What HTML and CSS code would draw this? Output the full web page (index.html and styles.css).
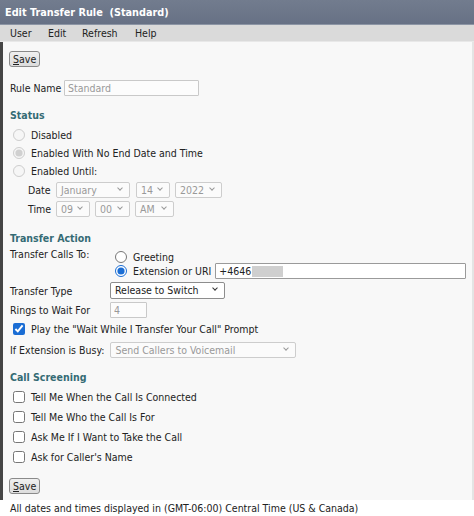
FILE: index.html
```html
<!DOCTYPE html>
<html lang="en">
<head>
    <meta charset="UTF-8">
    <title>Edit Transfer Rule (Standard)</title>
    <link rel="stylesheet" href="styles.css">
</head>
<body>
    <div class="titlebar">Edit Transfer Rule&nbsp; (Standard)</div>
    <div class="menubar">
        <span class="m-user">User</span>
        <span class="m-edit">Edit</span>
        <span class="m-refresh">Refresh</span>
        <span>Help</span>
    </div>

    <div class="content">
        <button class="btn"><u>S</u>ave</button>

        <div class="row rule-row">
            <label class="rule-label">Rule Name</label>
            <input class="text rule-name" type="text" value="Standard" disabled>
        </div>

        <h3>Status</h3>
        <div class="radio-row"><input type="radio" name="status" disabled><span>Disabled</span></div>
        <div class="radio-row"><input type="radio" name="status" checked disabled><span>Enabled With No End Date and Time</span></div>
        <div class="radio-row"><input type="radio" name="status" disabled><span>Enabled Until:</span></div>
        <div class="row date-row">
            <label class="dlabel">Date</label>
            <span class="sel w-month">January</span>
            <span class="sel w-day">14</span>
            <span class="sel w-year">2022</span>
        </div>
        <div class="row date-row">
            <label class="dlabel">Time</label>
            <span class="sel w-hour">09</span>
            <span class="sel w-min">00</span>
            <span class="sel w-ampm">AM</span>
        </div>

        <h3 class="section">Transfer Action</h3>
        <div class="calls-to">
            <label class="calls-label">Transfer Calls To:</label>
            <div class="calls-options">
                <div class="radio-row sub"><input type="radio" name="to"><span>Greeting</span></div>
                <div class="radio-row sub ext">
                    <input type="radio" name="to" checked><span class="nowrap">Extension or URI</span>
                    <div class="text ext-field">+4646<span class="redact"></span></div>
                </div>
            </div>
        </div>
        <div class="row type-row">
            <label class="col-label">Transfer Type</label>
            <span class="sel enabled w-type">Release to Switch</span>
        </div>
        <div class="row rings-row">
            <label class="col-label">Rings to Wait For</label>
            <input class="text rings" type="text" value="4" disabled>
        </div>
        <div class="check-row"><input type="checkbox" checked><span>Play the "Wait While I Transfer Your Call" Prompt</span></div>
        <div class="row busy-row">
            <label class="busy-label">If Extension is Busy:</label>
            <span class="sel w-busy">Send Callers to Voicemail</span>
        </div>

        <h3 class="screening">Call Screening</h3>
        <div class="check-row"><input type="checkbox"><span>Tell Me When the Call Is Connected</span></div>
        <div class="check-row"><input type="checkbox"><span>Tell Me Who the Call Is For</span></div>
        <div class="check-row"><input type="checkbox"><span>Ask Me If I Want to Take the Call</span></div>
        <div class="check-row"><input type="checkbox"><span>Ask for Caller's Name</span></div>

        <button class="btn bottom"><u>S</u>ave</button>
    </div>

    <div class="footer">All dates and times displayed in (GMT-06:00) Central Time (US &amp; Canada)</div>
</body>
</html>
```

FILE: styles.css
```css
body {
    margin: 0;
    font-family: "DejaVu Sans Condensed", "DejaVu Sans", Verdana, sans-serif;
    font-size: 10.5px;
    color: #222;
    background: #fff;
    width: 474px;
}
.titlebar {
    height: 25px;
    line-height: 26px;
    padding-left: 5px;
    background: linear-gradient(#727c8e, #677185);
    border-bottom: 1px solid #8c95a5;
    color: #fff;
    font-weight: bold;
    font-size: 10.8px;
    box-sizing: border-box;
}
.menubar {
    height: 17px;
    line-height: 16px;
    background: #dadada;
    border-bottom: 1px solid #e8e8e8;
    box-sizing: border-box;
    padding-left: 10px;
    display: flex;
}
.m-user { width: 38px; }
.m-edit { width: 34px; }
.m-refresh { width: 53px; }
.content {
    background: #f8f8f8;
    border-left: 3px solid #454545;
    border-right: 2px solid #e4e4e4;
    padding: 9px 6px 6px 6px;
    height: 458px;
    box-sizing: border-box;
}
.btn {
    display: block;
    height: 16px;
    padding: 0 3px;
    font-family: inherit;
    font-size: 10.5px;
    color: #222;
    background: linear-gradient(#f0f0f0, #dcdcdc);
    border: 1px solid #8a8a8a;
    border-radius: 3px;
    line-height: 13px;
}
.btn.bottom {
    margin-top: 11px;
}
.row {
    display: flex;
    align-items: center;
    padding-left: 1px;
}
.rule-row {
    margin-top: 12px;
    height: 17px;
}
.rule-label {
    width: 54px;
}
.text {
    font-family: inherit;
    font-size: 10.5px;
    height: 16px;
    box-sizing: border-box;
    border: 1px solid #c9c9c9;
    background: #fff;
    padding: 0 3px;
    border-radius: 1px;
}
.text:disabled {
    color: #999;
    background: #fcfcfc;
}
.rule-name {
    width: 135px;
}
h3 {
    margin: 12px 0 4px 1px;
    font-size: 10.5px;
    color: #346b74;
    height: 14px;
    line-height: 14px;
}
h3.section {
    margin-top: 13px;
    margin-bottom: 0;
}
h3.screening {
    margin-top: 10px;
    margin-bottom: 3px;
}
.radio-row {
    display: flex;
    align-items: center;
    height: 18px;
    padding-left: 4px;
}
.nowrap {
    white-space: nowrap;
}
input[type="radio"], input[type="checkbox"] {
    margin: 0 6px 0 0;
    width: 12px;
    height: 12px;
    flex: none;
    accent-color: #1a6dd4;
}
.date-row {
    height: 19px;
    padding-left: 19px;
}
.dlabel {
    width: 28px;
}
.sel {
    position: relative;
    display: inline-block;
    height: 16px;
    line-height: 14px;
    box-sizing: border-box;
    border: 1px solid #cdcdcd;
    border-radius: 2px;
    background: #fbfbfb;
    color: #999;
    padding-left: 4px;
    margin-right: 5px;
    white-space: nowrap;
}
.sel::after {
    content: "";
    position: absolute;
    right: 7px;
    top: 3px;
    width: 3px;
    height: 3px;
    border-right: 1px solid #999;
    border-bottom: 1px solid #999;
    transform: rotate(45deg);
}
.sel.enabled {
    color: #222;
    border-color: #8d8d8d;
    background: #fff;
}
.sel.enabled::after {
    border-color: #333;
}
.w-month { width: 74px; margin-right: 6px; }
.w-day { width: 34px; }
.w-year { width: 47px; }
.w-hour { width: 34px; }
.w-min { width: 35px; }
.w-ampm { width: 39px; }
.w-type { width: 115px; height: 17px; line-height: 15px; }
.w-busy { width: 186px; }
.calls-to {
    display: flex;
}
.calls-label {
    width: 105px;
    padding-left: 1px;
    padding-top: 2px;
    line-height: 14px;
    flex: none;
}
.col-label {
    width: 100px;
    flex: none;
}
.calls-options {
    flex: 1;
    padding-top: 6px;
}
.radio-row.sub {
    height: 12px;
    padding-left: 0;
}
.radio-row.ext {
    height: 16px;
}
.ext-field {
    flex: 1;
    margin-left: 4px;
    line-height: 14px;
    color: #222;
    border-color: #9a9a9a;
    display: flex;
    align-items: center;
}
.redact {
    display: inline-block;
    width: 31px;
    height: 11px;
    background: #cfcfcf;
    margin-left: 1px;
}
.type-row {
    height: 19px;
    margin-top: 2px;
}
.rings-row {
    height: 19px;
}
.rings {
    width: 37px;
}
.check-row {
    display: flex;
    align-items: center;
    height: 20px;
    padding-left: 4px;
}
.busy-row {
    height: 21px;
}
.busy-label {
    margin-right: 6px;
}
.footer {
    height: 16px;
    line-height: 16px;
    padding-left: 10px;
    background: #fff;
}
```
